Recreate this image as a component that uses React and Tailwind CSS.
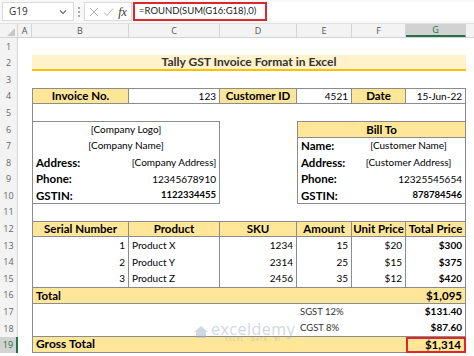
import React from 'react';

const font = { fontFamily: 'Lato, "Liberation Sans", sans-serif' };

// column widths for B..G
const B = 'w-[97px]';
const C = 'w-[91px]';
const D = 'w-[77px]';
const E = 'w-[55px]';
const F = 'w-[54px]';
const G = 'w-[60px]';

const COLS = [
  { l: 'A', w: 'w-[14px]' },
  { l: 'B', w: B },
  { l: 'C', w: C },
  { l: 'D', w: D },
  { l: 'E', w: E },
  { l: 'F', w: F },
  { l: 'G', w: G },
];

const Cell = ({ w, className = '', children }) => (
  <div className={`${w} shrink-0 h-full flex items-center px-[3px] border-[#8c8c8c] whitespace-nowrap ${className}`}>
    {children}
  </div>
);

const Row = ({ n, active, children }) => (
  <div className="flex h-[16.6px]">
    <div
      className={`w-[18px] shrink-0 flex items-center justify-center text-[9px] border-r ${
        active ? 'bg-[#d2d2d2] text-[#217346] border-[#217346] border-r-2' : 'bg-[#f3f3f3] text-[#666] border-[#d4d4d4]'
      }`}
      style={{ fontFamily: '"Open Sans", sans-serif' }}
    >
      {n}
    </div>
    <div className="w-[14px] shrink-0" />
    <div className="flex w-[434px] h-full text-black" style={font}>
      {children}
    </div>
  </div>
);

const FormulaBar = () => (
  <div className="h-[24px] flex items-center bg-[#f7f7f7] border-b border-[#e1e1e1]" style={{ fontFamily: '"Open Sans", sans-serif' }}>
    <div className="ml-[2px] w-[72px] h-[19px] bg-white border border-[#dadada] flex items-center justify-between px-[6px] text-[10px] text-[#333]">
      <span>G19</span>
      <svg width="8" height="6" viewBox="0 0 8 6">
        <path d="M1 1.5 L4 4.5 L7 1.5" stroke="#666" strokeWidth="1.1" fill="none" />
      </svg>
    </div>
    <div className="w-[10px] flex flex-col items-center gap-[2px]">
      <span className="w-[2px] h-[2px] bg-[#aaa]" />
      <span className="w-[2px] h-[2px] bg-[#aaa]" />
      <span className="w-[2px] h-[2px] bg-[#aaa]" />
    </div>
    <div className="w-[48px] h-[19px] bg-white border border-[#dadada] flex items-center justify-around px-[2px]">
      <svg width="10" height="10" viewBox="0 0 10 10">
        <path d="M1 1 L9 9 M9 1 L1 9" stroke="#b5b5b5" strokeWidth="1" />
      </svg>
      <svg width="11" height="10" viewBox="0 0 11 10">
        <path d="M1 5.5 L4 8.5 L10 1.5" stroke="#b5b5b5" strokeWidth="1" fill="none" />
      </svg>
      <span className="text-[12px] italic text-[#333]" style={{ fontFamily: '"Liberation Serif", serif' }}>
        fx
      </span>
    </div>
    <div className="ml-[1px] w-[134px] h-[19px] bg-white border-2 border-[#e0262b] flex items-center px-[4px] text-[9.5px] text-[#222] whitespace-nowrap overflow-hidden" style={font}>
      =ROUND(SUM(G16:G18),0)
    </div>
    <div className="flex-1 h-[19px] bg-white" />
  </div>
);

const ColHeader = () => (
  <div className="h-[14px] flex bg-[#f3f3f3] border-b border-[#d4d4d4] text-[9px] text-[#555]" style={{ fontFamily: '"Open Sans", sans-serif' }}>
    <div className="w-[18px] shrink-0 flex items-end justify-end pr-[2px] pb-[1px] border-r border-[#d4d4d4]">
      <svg width="8" height="8" viewBox="0 0 8 8">
        <path d="M8 0 L8 8 L0 8 Z" fill="#c7c7c7" />
      </svg>
    </div>
    {COLS.map((c) => (
      <div
        key={c.l}
        className={`${c.w} shrink-0 flex items-center justify-center border-r border-[#d4d4d4] ${
          c.l === 'G' ? 'bg-[#d2d2d2] text-[#217346] border-b-2 border-b-[#217346]' : ''
        }`}
      >
        {c.l}
      </div>
    ))}
    <div className="flex-1" />
  </div>
);

const yellow = 'bg-[#ffe699]';
const head = 'font-bold text-[11.5px]';
const reg = 'text-[10px]';

export default function App() {
  return (
    <div className="w-[474px] h-[356px] bg-white overflow-hidden relative">
      <FormulaBar />
      <ColHeader />

      <Row n={1} />
      <Row n={2}>
        <div className="w-[434px] h-full bg-[#fff2cc] border-b-2 border-[#ffc000] flex items-center justify-center font-bold text-[12px] text-[#333]">
          Tally GST Invoice Format in Excel
        </div>
      </Row>
      <Row n={3} />
      <Row n={4}>
        <Cell w={B} className={`${yellow} border-l border-t border-b border-r justify-center ${head}`}>Invoice No.</Cell>
        <Cell w={C} className={`border-t border-b border-r justify-end ${reg}`}>123</Cell>
        <Cell w={D} className={`${yellow} border-t border-b border-r justify-center ${head}`}>Customer ID</Cell>
        <Cell w={E} className={`border-t border-b border-r justify-end ${reg}`}>4521</Cell>
        <Cell w={F} className={`${yellow} border-t border-b border-r justify-center ${head}`}>Date</Cell>
        <Cell w={G} className={`border-t border-b border-r justify-end ${reg}`}>15-Jun-22</Cell>
      </Row>
      <Row n={5}>
        <div className="w-[434px] h-full border-l border-r border-[#8c8c8c]" />
      </Row>
      <Row n={6}>
        <Cell w="w-[188px]" className={`border-l border-r border-t justify-center ${reg}`}>[Company Logo]</Cell>
        <Cell w={D} />
        <Cell w="w-[169px]" className={`${yellow} border-l border-r border-t border-b justify-center ${head}`}>Bill To</Cell>
      </Row>
      <Row n={7}>
        <Cell w="w-[188px]" className={`border-l border-r justify-center ${reg}`}>[Company Name]</Cell>
        <Cell w={D} />
        <Cell w={E} className={`border-l ${head}`}>Name:</Cell>
        <Cell w="w-[114px]" className={`border-r justify-center ${reg}`}>[Customer Name]</Cell>
      </Row>
      <Row n={8}>
        <Cell w={B} className={`border-l ${head}`}>Address:</Cell>
        <Cell w={C} className={`border-r justify-center ${reg}`}>[Company Address]</Cell>
        <Cell w={D} />
        <Cell w={E} className={`border-l ${head}`}>Address:</Cell>
        <Cell w="w-[114px]" className={`border-r justify-center ${reg}`}>[Customer Address]</Cell>
      </Row>
      <Row n={9}>
        <Cell w={B} className={`border-l ${head}`}>Phone:</Cell>
        <Cell w={C} className={`border-r justify-end ${reg}`}>12345678910</Cell>
        <Cell w={D} />
        <Cell w={E} className={`border-l ${head}`}>Phone:</Cell>
        <Cell w="w-[114px]" className={`border-r justify-end ${reg}`}>12325545654</Cell>
      </Row>
      <Row n={10}>
        <Cell w={B} className={`border-l border-b ${head}`}>GSTIN:</Cell>
        <Cell w={C} className="border-r border-b justify-end font-bold text-[9.5px]">1122334455</Cell>
        <Cell w={D} />
        <Cell w={E} className={`border-l border-b ${head}`}>GSTIN:</Cell>
        <Cell w="w-[114px]" className="border-r border-b justify-end font-bold text-[9.5px]">878784546</Cell>
      </Row>
      <Row n={11}>
        <div className="w-[434px] h-full border-l border-r border-[#8c8c8c]" />
      </Row>
      <Row n={12}>
        <Cell w={B} className={`${yellow} border-l border-t border-b border-r justify-center ${head}`}>Serial Number</Cell>
        <Cell w={C} className={`${yellow} border-t border-b border-r justify-center ${head}`}>Product</Cell>
        <Cell w={D} className={`${yellow} border-t border-b border-r justify-center ${head}`}>SKU</Cell>
        <Cell w={E} className={`${yellow} border-t border-b border-r justify-center ${head}`}>Amount</Cell>
        <Cell w={F} className={`${yellow} border-t border-b border-r justify-center ${head} px-0`}>Unit Price</Cell>
        <Cell w={G} className={`${yellow} border-t border-b border-r justify-center ${head} px-0`}>Total Price</Cell>
      </Row>
      {[
        [13, 1, 'Product X', 1234, 15, '$20', '$300'],
        [14, 2, 'Product Y', 2314, 25, '$15', '$375'],
        [15, 3, 'Product Z', 2456, 35, '$12', '$420'],
      ].map(([n, s, p, sku, amt, up, tp]) => (
        <Row key={n} n={n}>
          <Cell w={B} className={`border-l border-r justify-end ${reg}`}>{s}</Cell>
          <Cell w={C} className={`border-r ${reg}`}>{p}</Cell>
          <Cell w={D} className={`border-r justify-end ${reg}`}>{sku}</Cell>
          <Cell w={E} className={`border-r justify-end ${reg}`}>{amt}</Cell>
          <Cell w={F} className={`border-r justify-end ${reg}`}>{up}</Cell>
          <Cell w={G} className="border-r justify-end font-bold text-[10px]">{tp}</Cell>
        </Row>
      ))}
      <Row n={16}>
        <Cell w="w-[374px]" className={`${yellow} border-l border-t border-b ${head}`}>Total</Cell>
        <Cell w={G} className={`${yellow} border-r border-t border-b justify-end font-bold text-[11.5px]`}>$1,095</Cell>
      </Row>
      <Row n={17}>
        <Cell w="w-[265px]" className="border-l" />
        <Cell w="w-[109px]" className="text-[9.5px] text-[#333]">SGST 12%</Cell>
        <Cell w={G} className="border-r justify-end font-bold text-[10px]">$131.40</Cell>
      </Row>
      <Row n={18}>
        <Cell w="w-[265px]" className="border-l border-b" />
        <Cell w="w-[109px]" className="border-b text-[9.5px] text-[#333]">CGST 8%</Cell>
        <Cell w={G} className="border-r border-b justify-end font-bold text-[10px]">$87.60</Cell>
      </Row>
      <Row n={19} active>
        <Cell w="w-[374px]" className={`${yellow} border-l border-b font-bold text-[12px]`}>Gross Total</Cell>
        <Cell w={G} className={`${yellow} border-2 border-[#e0262b] justify-end font-bold text-[11.5px]`}>$1,314</Cell>
      </Row>

      {/* watermark */}
      <div className="absolute left-[193px] top-[321px] flex items-center gap-[2px] opacity-50 pointer-events-none">
        <svg width="16" height="14" viewBox="0 0 16 14">
          <path d="M8 1 L15 7 L13 7 L13 13 L3 13 L3 7 L1 7 Z" fill="#9fb3cc" />
        </svg>
        <div className="flex flex-col items-center leading-none">
          <span className="text-[16px] text-[#9fb3cc] tracking-[0.5px]" style={{ fontFamily: '"Open Sans", sans-serif' }}>
            exceldemy
          </span>
          <span className="text-[5px] text-[#9aa] tracking-[1px]" style={{ fontFamily: '"Open Sans", sans-serif' }}>
            EXCEL · DATA · BI
          </span>
        </div>
      </div>
    </div>
  );
}
